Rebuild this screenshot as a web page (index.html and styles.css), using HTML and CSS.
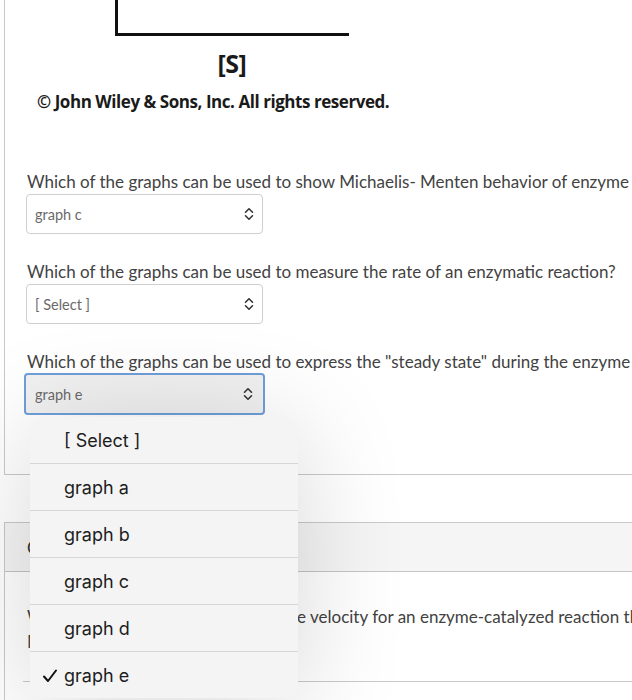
FILE: index.html
```html
<!DOCTYPE html>
<html lang="en">
<head>
<meta charset="utf-8">
<title>Quiz</title>
<link rel="stylesheet" href="styles.css">
</head>
<body>
<div class="page">
  <section class="card card-first">
    <div class="figure">
      <div class="axes"></div>
      <div class="axis-label">[S]</div>
      <div class="copyright">© John Wiley &amp; Sons, Inc. All rights reserved.</div>
    </div>

    <div class="question question-first">
      <p class="q-text">Which of the graphs can be used to show Michaelis- Menten behavior of enzyme kinetics?</p>
      <div class="select">
        <span class="select-value">graph c</span>
        <svg class="chev" width="10" height="14" viewBox="0 0 10 14"><path d="M1.5 5.2 L5 1.8 L8.5 5.2 M1.5 8.8 L5 12.2 L8.5 8.8" fill="none" stroke="#333" stroke-width="1.6" stroke-linecap="round" stroke-linejoin="round"/></svg>
      </div>
    </div>

    <div class="question">
      <p class="q-text">Which of the graphs can be used to measure the rate of an enzymatic reaction?</p>
      <div class="select">
        <span class="select-value">[ Select ]</span>
        <svg class="chev" width="10" height="14" viewBox="0 0 10 14"><path d="M1.5 5.2 L5 1.8 L8.5 5.2 M1.5 8.8 L5 12.2 L8.5 8.8" fill="none" stroke="#333" stroke-width="1.6" stroke-linecap="round" stroke-linejoin="round"/></svg>
      </div>
    </div>

    <div class="question">
      <p class="q-text">Which of the graphs can be used to express the "steady state" during the enzyme catalyzed reaction?</p>
      <div class="select select-focus">
        <span class="select-value">graph e</span>
        <svg class="chev" width="10" height="14" viewBox="0 0 10 14"><path d="M1.5 5.2 L5 1.8 L8.5 5.2 M1.5 8.8 L5 12.2 L8.5 8.8" fill="none" stroke="#333" stroke-width="1.6" stroke-linecap="round" stroke-linejoin="round"/></svg>
      </div>
    </div>
  </section>

  <section class="card card-second">
    <header class="card-head">Question 13</header>
    <div class="card-body">
      <p class="q-text q-wrap">Which of these graphs represents the velocity for an enzyme-catalyzed reaction that follows<br>Michaelis-Menten kinetics?</p>
      <div class="answer-rule"></div>
    </div>
  </section>

  <ul class="popover">
    <li class="opt">[ Select ]</li>
    <li class="opt">graph a</li>
    <li class="opt">graph b</li>
    <li class="opt">graph c</li>
    <li class="opt">graph d</li>
    <li class="opt opt-checked"><svg class="check" width="16" height="16" viewBox="0 0 16 16"><path d="M2 8.5 L6 13 L14 2.5" fill="none" stroke="#111" stroke-width="2" stroke-linecap="round" stroke-linejoin="round"/></svg>graph e</li>
  </ul>
</div>
</body>
</html>
```

FILE: styles.css
```css
html, body {
  margin: 0;
  padding: 0;
  background: #ffffff;
}

.page {
  position: relative;
  width: 632px;
  height: 700px;
  overflow: hidden;
  font-family: Lato, "Open Sans", sans-serif;
}

.card {
  width: 900px;
  margin-left: 4px;
  border-left: 1px solid #c9c9c9;
  box-sizing: border-box;
}

.card-first {
  border-bottom: 1px solid #c9c9c9;
  padding: 0 0 59px 22px;
}

.figure {
  font-family: "Open Sans", "Noto Sans", sans-serif;
  font-weight: 700;
  color: #1a1a1a;
}

.axes {
  margin-left: 88px;
  width: 231px;
  height: 33px;
  border-left: 3px solid #111;
  border-bottom: 3px solid #111;
}

.axis-label {
  width: 234px;
  margin-left: 88px;
  text-align: center;
  font-size: 25px;
  line-height: 30px;
  margin-top: 12px;
  letter-spacing: -0.5px;
}

.copyright {
  margin-left: 10px;
  margin-top: 13px;
  font-size: 17px;
  line-height: 22px;
  letter-spacing: -0.45px;
}

.question-first {
  margin-top: 58px;
}

.question + .question {
  margin-top: 27px;
}

.q-text {
  margin: 0 0 1px 0;
  font-size: 17px;
  line-height: 22px;
  color: #424242;
  white-space: nowrap;
}

.select {
  width: 237px;
  height: 40px;
  margin-left: -1px;
  box-sizing: border-box;
  border: 1px solid #cfcfcf;
  border-radius: 4px;
  background: #ffffff;
  display: flex;
  align-items: center;
  justify-content: space-between;
  padding: 0 8px 0 8px;
}

.select-value {
  font-size: 14.5px;
  color: #6a6a6a;
}

.chev {
  display: block;
}

.select-focus {
  width: 241px;
  height: 42px;
  margin-left: -3px;
  margin-top: -1px;
  border: 2px solid #6f9fd9;
  background: #f1f1f1;
  padding-left: 9px;
  padding-right: 10px;
}

.card-second {
  margin-top: 47px;
  border-top: 1px solid #c9c9c9;
  height: 200px;
}

.card-head {
  height: 49px;
  background: #f5f5f5;
  border-bottom: 1px solid #c4c4c4;
  box-sizing: border-box;
  padding-left: 22px;
  display: flex;
  align-items: center;
  font-size: 17px;
  color: #2d2d2d;
}

.card-body {
  padding: 32px 0 0 22px;
}

.q-wrap {
  line-height: 25px;
}

.answer-rule {
  margin-top: 27px;
  margin-left: -4px;
  height: 1px;
  background: #c9c9c9;
}

.popover {
  position: absolute;
  left: 30px;
  top: 417px;
  width: 268px;
  margin: 0;
  padding: 0;
  list-style: none;
  background: #f4f4f4;
  border-radius: 13px;
  box-shadow: 0 10px 110px rgba(0, 0, 0, 0.16);
  font-family: Inter, "Liberation Sans", sans-serif;
  font-size: 18px;
  color: #1d1d1d;
  overflow: hidden;
}

.opt {
  height: 47px;
  box-sizing: border-box;
  display: flex;
  align-items: center;
  padding-left: 34px;
  border-top: 1px solid #d6d6d6;
  position: relative;
}

.opt:first-child {
  border-top: none;
  height: 46px;
}

.check {
  position: absolute;
  left: 12px;
  top: 16px;
}
```
